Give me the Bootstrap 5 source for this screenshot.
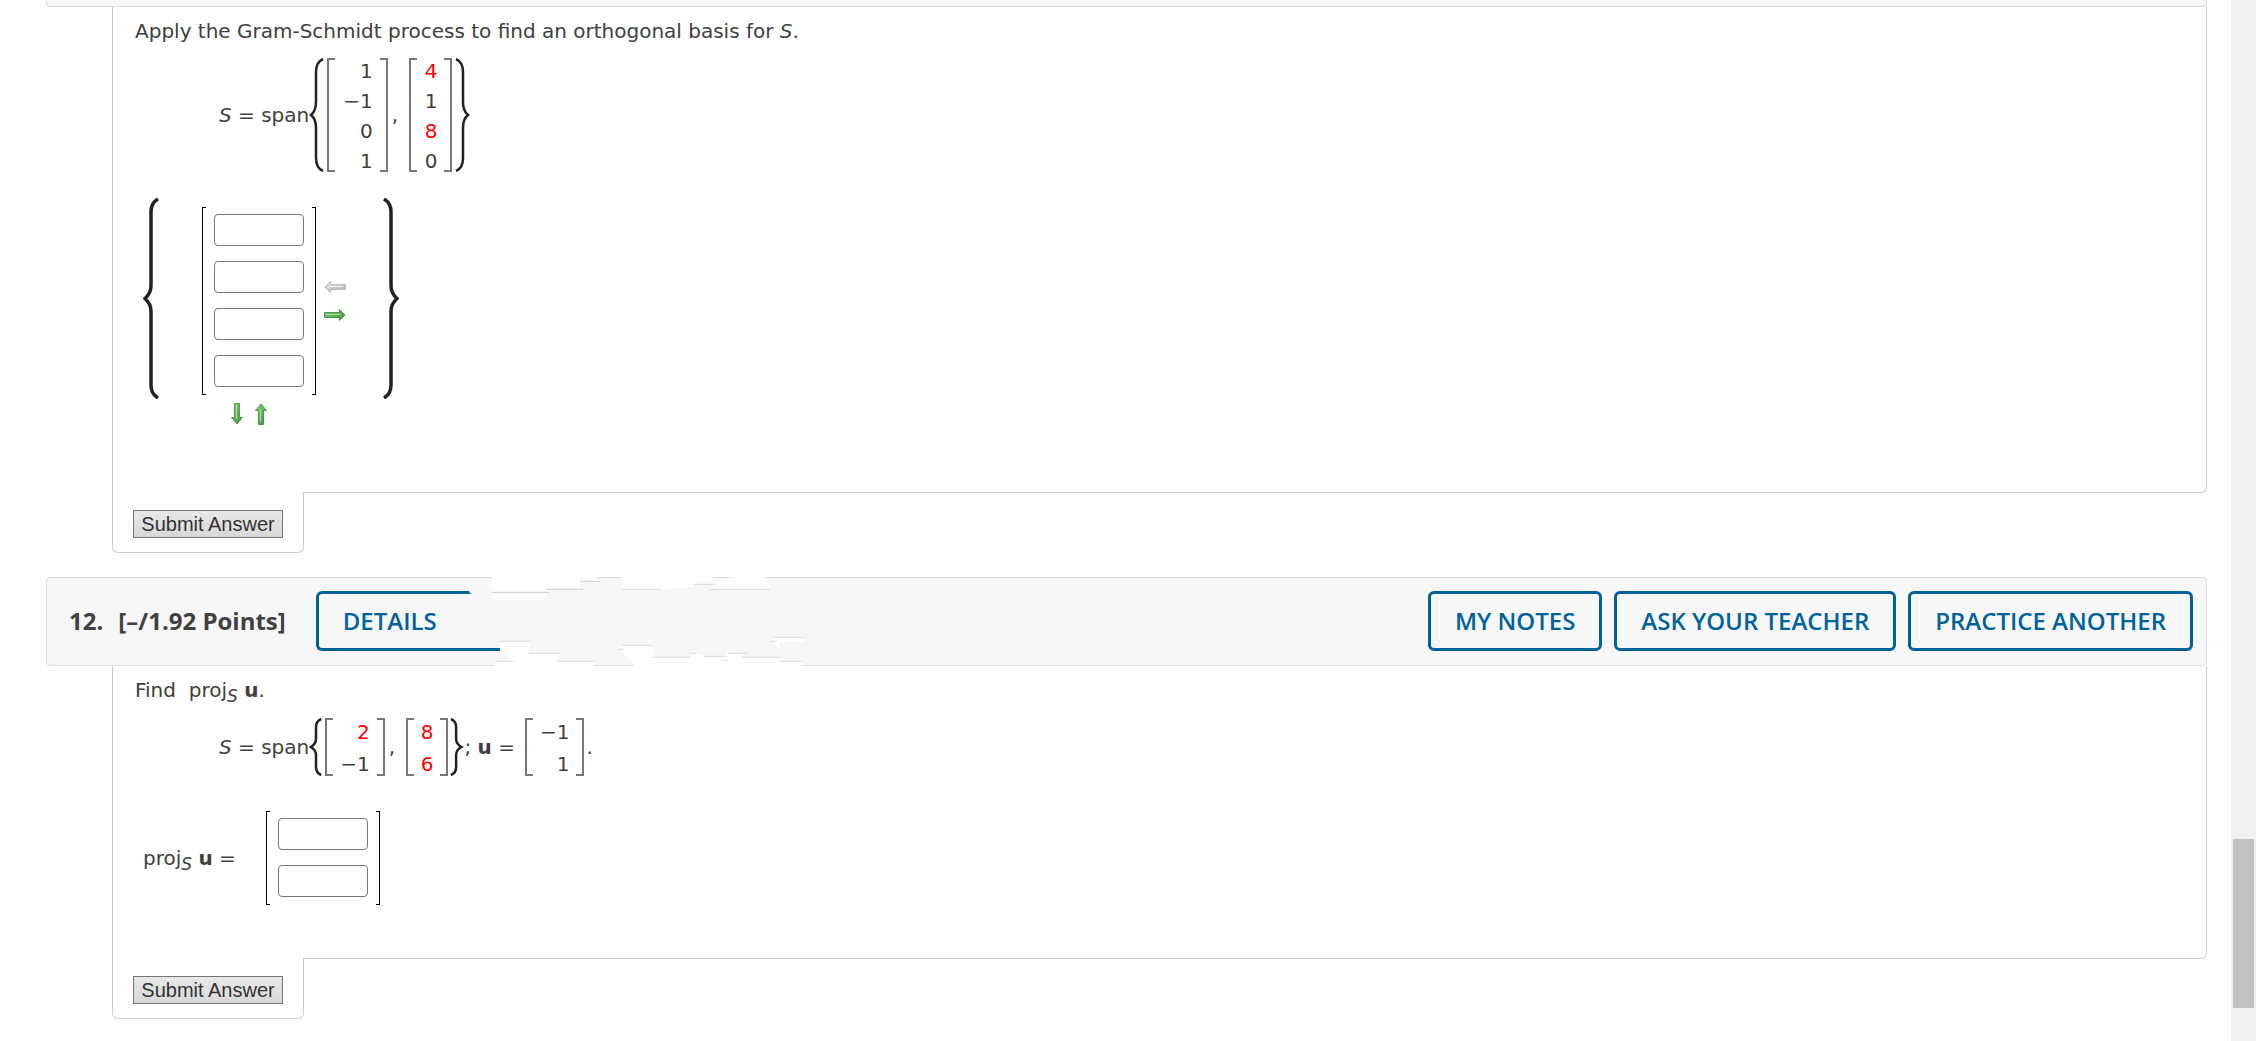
<!DOCTYPE html>
<html lang="en">
<head>
<meta charset="utf-8">
<meta name="viewport" content="width=device-width, initial-scale=1">
<title>Linear Algebra Assignment</title>
<link rel="stylesheet" href="https://cdn.jsdelivr.net/npm/bootstrap@5.3.0/dist/css/bootstrap.min.css">
<style>
body{font-family:Verdana,"DejaVu Sans",sans-serif;font-size:20px;line-height:24px;color:#404040;background:#fff}
.page-main{padding:0 24px 24px 46px}
.q-head{background:#f7f7f7;border:1px solid #ddd;border-radius:4px;padding:13px 13px 14px;font-family:"Open Sans",sans-serif;font-size:24px}
.q-head-end{border-top:0;border-radius:0 0 4px 4px;padding:3px}
.q-title{font-size:24px;line-height:32px;font-weight:700;margin:0 30px 0 9px;gap:15px}
.btn-q{height:60px;border:3px solid #00629b;border-radius:6px;padding:0 24px;font-size:24px;font-weight:600;line-height:32px;color:#00629b}
.btn-q:hover{background:#00629b;color:#fff}
.btn-cut{width:184px;text-align:left;border-right:0;border-radius:6px 0 0 6px}
.wipe{left:403px;top:-17px;width:400px;height:120px;pointer-events:none}
.q-wrap{margin-left:66px}
.q-body{border:1px solid #ccc;border-top:0;border-radius:0 0 6px 0;padding:12px 22px 67px}
.q-body-short{padding-bottom:53px}
.q-tab{width:192px;margin-top:-1px;margin-bottom:24px;padding:18px 20px 14px;background:#fff;border:1px solid #ccc;border-top:0;border-radius:0 0 6px 6px}
.btn-send{width:150px;height:28px;padding:0;border:1px solid #767676;border-radius:0;background:linear-gradient(#e8e8e8,#d8d8d8);font-family:Arial,"Liberation Sans",sans-serif;font-size:20px;line-height:24px;color:#333}
.expr{margin:15px 0 0 84px}
.expr-tall{height:114px}
.expr-low{height:58px}
.brace{width:16px;height:100%;display:block;flex:none}
.brace path{fill:none;stroke:#222;vector-effect:non-scaling-stroke}
.expr-low .brace{width:14px}
.mtx{position:relative;height:100%;margin:0 2px;padding:0 15px 0 16px;text-align:right}
.mtx::before,.mtx::after,.entry::before,.entry::after{content:"";position:absolute;top:0;bottom:0;width:8px;border:2px solid #777}
.mtx::before,.entry::before{left:0;border-right:0}
.mtx::after,.entry::after{right:0;border-left:0}
.mtx span{display:block;line-height:30px}
.mtx span:first-child{margin-top:-2px}
.mtx-two{padding:0 15px}
.mtx-two span{line-height:32px}
.rnd{color:#f00}
.comma{width:17px;padding-left:2px}
.answer{margin-top:26px}
.answer .brace{height:201px}
.answer-rows{margin-left:43px;padding-top:9px}
.row-tools{margin:8px 20px 0 0}
.col-tools{margin:9px 21px 0 8px;height:188px}
.entry{position:relative;padding:7px 12px 8px;display:flex;flex-direction:column;gap:15px}
.entry::before,.entry::after{width:4px;border-width:1px;border-color:#000}
.entry input{width:90px;height:32px;border:1px solid #767676;border-radius:4px;padding:0 6px;font-size:18px}
.proj{margin:35px 0 0 8px;gap:30px}
.ar{border:0;background:none;padding:0;display:block;line-height:0}
.sub-s{font-size:17px;font-style:italic;position:relative;top:5px}
.scroll-col{width:25px;background:#f0f0f0;padding:0 2px}
.thumb{background:#c1c1c1;flex:169}
.sp-a{flex:837}.sp-b{flex:35}
</style>
</head>
<body>
<svg width="0" height="0" class="position-absolute" aria-hidden="true"><defs>
<linearGradient id="gr" x1="0" y1="0" x2="1" y2="1"><stop offset="0" stop-color="#8fd080"/><stop offset="1" stop-color="#3f8a3f"/></linearGradient>
<linearGradient id="gg" x1="0" y1="0" x2="1" y2="1"><stop offset="0" stop-color="#e6e6e6"/><stop offset="1" stop-color="#b2b2b2"/></linearGradient>
</defs></svg>
<div class="d-flex min-vh-100">
<main class="page-main flex-grow-1">
  <div class="q-head q-head-end"></div>
  <form class="q-wrap">
    <div class="q-body">
      <div>Apply the Gram-Schmidt process to find an orthogonal basis for <i>S</i>.</div>
      <div class="expr expr-tall d-flex align-items-center">
        <span><i>S</i> = span</span>
        <svg class="brace" viewBox="0 0 16 114" preserveAspectRatio="none"><path stroke-width="2.5" d="M14 1Q7 4 7 14V44Q7 53 2 57Q7 61 7 70V100Q7 110 14 113"/></svg>
        <div class="mtx"><span>1</span><span>−1</span><span>0</span><span>1</span></div>
        <span class="comma">,</span>
        <div class="mtx"><span class="rnd">4</span><span>1</span><span class="rnd">8</span><span>0</span></div>
        <svg class="brace" viewBox="0 0 16 114" preserveAspectRatio="none"><path stroke-width="2.5" d="M2 1Q9 4 9 14V44Q9 53 14 57Q9 61 9 70V100Q9 110 2 113"/></svg>
      </div>
      <div class="answer d-flex align-items-start">
        <svg class="brace ms-2" viewBox="0 0 16 201"><path stroke-width="3.5" d="M15 1Q8 5 8 14V88Q8 95 2 100.5Q8 106 8 113V187Q8 196 15 200"/></svg>
        <div class="answer-rows d-flex flex-column align-items-center">
          <div class="entry">
            <input aria-label="Row 1"><input aria-label="Row 2"><input aria-label="Row 3"><input aria-label="Row 4">
          </div>
          <div class="row-tools d-flex gap-2">
            <button type="button" class="ar" aria-label="Remove row"><svg width="16" height="22"><path fill="url(#gr)" stroke="#4f9a4a" d="M5.5 .5H10.5V14.5H13.5L8 21 2.5 14.5H5.5Z"/><path stroke="#a9dfa0" d="M7.5 2V16"/></svg></button>
            <button type="button" class="ar" aria-label="Add row"><svg width="16" height="22"><path fill="url(#gr)" stroke="#4f9a4a" d="M5.5 21.5H10.5V7.5H13.5L8 1 2.5 7.5H5.5Z"/><path stroke="#a9dfa0" d="M7.5 6V19"/></svg></button>
          </div>
        </div>
        <div class="col-tools d-flex flex-column justify-content-center gap-3">
          <button type="button" class="ar" aria-label="Remove column"><svg width="22" height="12"><path fill="url(#gg)" stroke="#bbb" d="M21.5 3.5V8.5H6.5V11.5L1 6 6.5 .5V3.5Z"/><path stroke="#eee" d="M5 5.5H19"/></svg></button>
          <button type="button" class="ar" aria-label="Add column"><svg width="22" height="12"><path fill="url(#gr)" stroke="#4f9a4a" d="M.5 3.5V8.5H15.5V11.5L21 6 15.5 .5V3.5Z"/><path stroke="#a9dfa0" d="M2 5.5H17"/></svg></button>
        </div>
        <svg class="brace ms-3" viewBox="0 0 16 201"><path stroke-width="3.5" d="M1 1Q8 5 8 14V88Q8 95 14 100.5Q8 106 8 113V187Q8 196 1 200"/></svg>
      </div>
    </div>
    <div class="q-tab"><button type="button" class="btn btn-send">Submit Answer</button></div>
  </form>

  <div class="q-head position-relative d-flex align-items-center">
    <h2 class="q-title d-flex"><span>12.</span><span>[–/1.92 Points]</span></h2>
    <button type="button" class="btn btn-q btn-cut">DETAILS</button>
    <div class="d-flex gap-2 ms-auto">
      <button type="button" class="btn btn-q">MY NOTES</button>
      <button type="button" class="btn btn-q ms-1">ASK YOUR TEACHER</button>
      <button type="button" class="btn btn-q ms-1">PRACTICE ANOTHER</button>
    </div>
    <svg class="wipe position-absolute" viewBox="0 0 1200 360" aria-hidden="true">
      <path fill="#f7f7f7" d="M56 86H155V104H68L60 96Z"/>
      <g fill="#fff">
        <path d="M125 40H440V50L452 62H390V85H290L298 94 280 116H135L125 94Z"/>
        <path d="M515 40H785L792 70H730V79L635 85H515Z"/>
        <path d="M775 85Q815 48 870 46H945L962 85Z"/>
        <path d="M145 241H242L235 277H330L320 301H435L425 325H135V301H190L158 268Z"/>
        <path d="M510 253H612L605 289H720V277H742L765 287H830V277H890L875 289H992L985 301H1055L1050 325H565Q535 300 510 262Z"/>
        <path d="M968 229H1068L1062 242H985L992 265 965 242Z"/>
      </g>
      <path fill="none" stroke="#ccc" stroke-width="3" d="M390 61H452M290 85H400M125 94H298"/>
      <path fill="none" stroke="#ddd" stroke-width="3" d="M515 85H635M730 70H792M775 85H962M145 241H242M232 277H330M135 301H190M320 301H435M515 253H612M505 265H522M605 289H722M718 277H740M762 286H830M835 277H892M875 289H992M985 301H1055M970 229H1068M960 241H980M812 298H832"/>
    </svg>
  </div>
  <form class="q-wrap">
    <div class="q-body q-body-short">
      <div>Find&nbsp; proj<span class="sub-s">S</span> <b>u</b>.</div>
      <div class="expr expr-low d-flex align-items-center">
        <span><i>S</i> = span</span>
        <svg class="brace" viewBox="0 0 16 58" preserveAspectRatio="none"><path stroke-width="2.5" d="M14 1Q8 3 8 9V21Q8 26 2 29Q8 32 8 37V49Q8 55 14 57"/></svg>
        <div class="mtx mtx-two"><span class="rnd">2</span><span>−1</span></div>
        <span class="comma">,</span>
        <div class="mtx mtx-two"><span class="rnd">8</span><span class="rnd">6</span></div>
        <svg class="brace" viewBox="0 0 16 58" preserveAspectRatio="none"><path stroke-width="2.5" d="M1 1Q7 3 7 9V21Q7 26 13 29Q7 32 7 37V49Q7 55 1 57"/></svg>
        <span class="me-2">; <b>u</b> =</span>
        <div class="mtx mtx-two"><span>−1</span><span>1</span></div>
        <span>.</span>
      </div>
      <div class="proj d-flex align-items-center">
        <span>proj<span class="sub-s">S</span> <b>u</b> =</span>
        <div class="entry"><input aria-label="Projection row 1"><input aria-label="Projection row 2"></div>
      </div>
    </div>
    <div class="q-tab mb-0"><button type="button" class="btn btn-send">Submit Answer</button></div>
  </form>
</main>
<div class="scroll-col d-flex flex-column" aria-hidden="true"><div class="sp-a"></div><div class="thumb"></div><div class="sp-b"></div></div>
</div>
<script src="https://cdn.jsdelivr.net/npm/bootstrap@5.3.0/dist/js/bootstrap.bundle.min.js"></script>
</body>
</html>
